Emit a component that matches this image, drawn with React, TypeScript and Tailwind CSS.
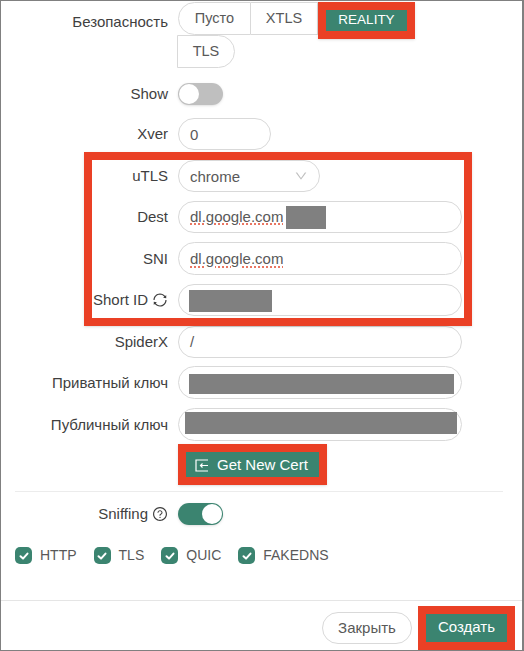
import React from 'react'
import { AiOutlineDown, AiOutlineQuestionCircle, AiOutlineSync } from 'react-icons/ai'

const Row: React.FC<{ label: React.ReactNode; className?: string; children: React.ReactNode }> = ({ label, className, children }) => (
  <div className={`flex items-center ${className ?? ''}`}>
    <div className="flex w-[167px] shrink-0 items-center justify-end gap-1 text-[#3f3f3f]">{label}</div>
    <div className="ml-[10px] flex h-full flex-1 items-center">{children}</div>
  </div>
)

const Input: React.FC<{ children?: React.ReactNode; className?: string }> = ({ children, className }) => (
  <div className={`relative flex h-full items-center rounded-full border border-[#d9d9d9] bg-white pl-[11px] text-[#595959] ${className ?? 'w-[284px]'}`}>
    {children}
  </div>
)

const Redact: React.FC<{ className: string }> = ({ className }) => <div className={`absolute bg-[#808080] ${className}`} />

const Toggle: React.FC<{ on?: boolean }> = ({ on }) => (
  <div className={`flex h-[22px] w-[45px] items-center rounded-full p-px shadow-sm ${on ? 'justify-end bg-[#3b8470]' : 'justify-start bg-[#bfbfbf]'}`}>
    <div className="h-5 w-5 rounded-full bg-white" />
  </div>
)

const Check: React.FC<{ label: string }> = ({ label }) => (
  <div className="flex items-center gap-2 text-[14px] text-[#595959]">
    <div className="flex h-[17px] w-[17px] items-center justify-center rounded-[5px] bg-[#3b8470]">
      <svg viewBox="0 0 12 12" className="h-3 w-3" fill="none" stroke="white" strokeWidth="2" strokeLinecap="round" strokeLinejoin="round">
        <path d="M2.5 6.3 5 8.6 9.5 3.6" />
      </svg>
    </div>
    <span>{label}</span>
  </div>
)

const Spell: React.FC<{ children: React.ReactNode }> = ({ children }) => (
  <span className="underline decoration-[#e2492f] decoration-dotted underline-offset-2">{children}</span>
)

export default function App() {
  return (
    <div className="relative h-[651px] w-[524px] overflow-hidden border-t border-r-2 border-b border-l border-[#808080] bg-white font-['Liberation_Sans',sans-serif] text-[15px]">
      <div className="pt-px">
        <Row label={<span className="mt-[9px] self-start">Безопасность</span>} className="h-[66px] items-start">
          <div className="flex w-full flex-col">
            <div className="flex h-[33px] text-[14.5px] text-[#595959]">
              <div className="flex h-[33px] w-[73px] items-center justify-center rounded-l-full border border-[#d9d9d9]">Пусто</div>
              <div className="flex h-[33px] w-[67px] items-center justify-center border-y border-r border-[#d9d9d9]">XTLS</div>
              <div className="h-[37px] w-[97px] border-8 border-[#ea4025] bg-[#3b8470] text-center text-[13.5px] leading-[19px] text-white shadow-sm">REALITY</div>
            </div>
            <div className="-ml-px flex h-[33px] w-[58px] items-center justify-center rounded-r-full border border-[#d9d9d9] text-[14.5px] text-[#595959]">TLS</div>
          </div>
        </Row>

        <Row label="Show" className="mt-[15px] h-[22px]"><Toggle /></Row>

        <Row label="Xver" className="mt-[13px] h-8">
          <Input className="w-[93px]"><span className="mt-0.5">0</span></Input>
        </Row>

        <Row label="uTLS" className="mt-[10px] h-8">
          <Input className="w-[142px]">
            <span className="mt-0.5">chrome</span>
            <AiOutlineDown className="absolute right-[11px] text-[14px] text-[#bfbfbf]" />
          </Input>
        </Row>

        <Row label="Dest" className="mt-[9px] h-8">
          <Input><Spell>dl.google.com</Spell><Redact className="top-1 left-[107px] h-[23px] w-10" /></Input>
        </Row>

        <Row label={<span className="mt-0.5">SNI</span>} className="mt-[9px] h-[33px]">
          <Input><span className="mt-0.5"><Spell>dl.google.com</Spell></span></Input>
        </Row>

        <Row label={<>Short ID <AiOutlineSync className="text-[16px]" /></>} className="mt-[9px] h-8">
          <Input><Redact className="top-[5px] left-[10px] h-[22px] w-[83px]" /></Input>
        </Row>

        <Row label="SpiderX" className="mt-[10px] h-8">
          <Input>/</Input>
        </Row>

        <Row label={<span className="mt-0.5">Приватный ключ</span>} className="mt-2 h-[33px]">
          <Input><Redact className="top-[7px] left-[10px] h-5 w-[265px]" /></Input>
        </Row>

        <Row label={<span className="mt-0.5">Публичный ключ</span>} className="mt-[9px] h-[33px]">
          <Input><Redact className="top-[3px] left-[6px] h-[22px] w-[272px]" /></Input>
        </Row>

        <div className="mt-[3px] ml-[177px] flex h-[41px] w-[149px] items-center gap-2 border-8 border-[#ea4025] bg-[#3b8470] pt-0.5 pl-[9px] text-white shadow-sm">
          <svg viewBox="0 0 14 13" className="h-[13px] w-[14px]" fill="none" stroke="white" strokeWidth="1.2">
            <path d="M13 1H1v11h12" />
            <path d="M13 6.5H5.5M7.5 4.5l-2 2 2 2" />
          </svg>
          <span>Get New Cert</span>
        </div>

        <div className="mt-[6px] mr-[19px] ml-[14px] border-t border-[#ececec]" />

        <Row label={<>Sniffing <AiOutlineQuestionCircle className="text-[16px]" /></>} className="mt-[11px] h-[22px]"><Toggle on /></Row>

        <div className="mt-5 ml-[14px] flex items-center gap-[17px]">
          <Check label="HTTP" />
          <Check label="TLS" />
          <Check label="QUIC" />
          <Check label="FAKEDNS" />
        </div>

        <div className="mt-[34px] border-t border-[#e5e5e5]" />

        <div className="flex items-start justify-end pt-[5px] pr-[7px]">
          <div className="mt-[6px] flex h-8 w-[90px] items-center justify-center rounded-full border border-[#d9d9d9] text-[#595959]">Закрыть</div>
          <div className="ml-[6px] h-[44px] w-[97px] border-8 border-[#ea4025] bg-[#3b8470] text-center leading-[26px] text-white">Создать</div>
        </div>
      </div>

      {/* annotation drawn over the inputs */}
      <div className="pointer-events-none absolute top-[151px] left-[83px] h-[174px] w-[388px] border-8 border-[#ea4025] shadow-sm" />
    </div>
  )
}
